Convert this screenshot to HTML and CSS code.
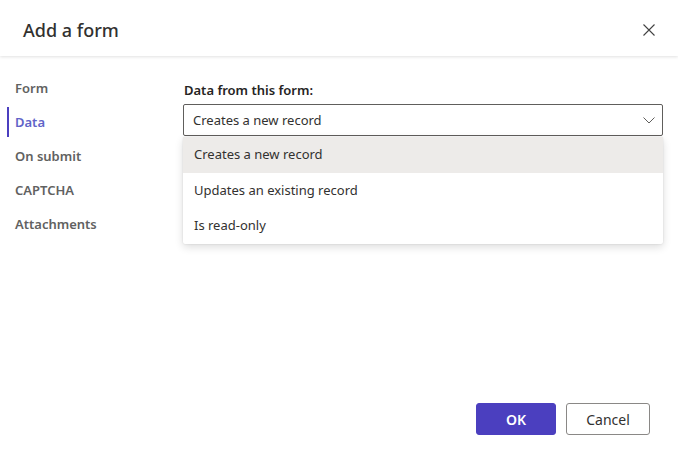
FILE: index.html
```html
<!DOCTYPE html>
<html lang="en">
<head>
  <meta charset="UTF-8">
  <meta name="viewport" content="width=device-width, initial-scale=1.0">
  <title>Add a form</title>
  <link rel="stylesheet" href="styles.css">
</head>
<body>
  <div class="dialog">
    <!-- Header -->
    <div class="dialog-header">
      <h1>Add a form</h1>
      <button class="close-btn" aria-label="Close">
        <svg width="12" height="12" viewBox="0 0 12 12">
          <path d="M0.5 0.5 L11.5 11.5 M11.5 0.5 L0.5 11.5" stroke="#424242" stroke-width="1.1" fill="none"/>
        </svg>
      </button>
    </div>

    <!-- Body -->
    <div class="dialog-body">
      <div class="side-nav">
        <div class="nav-item">Form</div>
        <div class="nav-item active">Data</div>
        <div class="nav-item">On submit</div>
        <div class="nav-item">CAPTCHA</div>
        <div class="nav-item">Attachments</div>
      </div>

      <div class="content">
        <label class="field-label">Data from this form:</label>
        <div class="dropdown">
          <div class="dropdown-box">
            <span>Creates a new record</span>
            <svg width="12" height="7" viewBox="0 0 12 7">
              <path d="M0.5 0.5 L6 6 L11.5 0.5" stroke="#605e5c" stroke-width="1" fill="none"/>
            </svg>
          </div>
          <div class="dropdown-menu">
            <div class="option selected">Creates a new record</div>
            <div class="option">Updates an existing record</div>
            <div class="option">Is read-only</div>
          </div>
        </div>
      </div>
    </div>

    <!-- Footer -->
    <div class="dialog-footer">
      <button class="btn primary">OK</button>
      <button class="btn">Cancel</button>
    </div>
  </div>
</body>
</html>
```

FILE: styles.css
```css
/* Reset and Base Styles */
* {
  margin: 0;
  padding: 0;
  box-sizing: border-box;
}

body {
  background: #ffffff;
  font-family: "Noto Sans", "Open Sans", sans-serif;
  color: #242424;
  width: 678px;
  height: 453px;
  overflow: hidden;
}

.dialog {
  display: flex;
  flex-direction: column;
  height: 100%;
}

/* Header */
.dialog-header {
  display: flex;
  justify-content: space-between;
  align-items: center;
  height: 56px;
  padding: 0 22px 0 23px;
  box-shadow: 0 1px 3px rgba(0, 0, 0, 0.12);
  position: relative;
  z-index: 1;
}

.dialog-header h1 {
  font-size: 18px;
  font-weight: 500;
  color: #323130;
  margin-top: 3px;
}

.close-btn {
  background: transparent;
  border: none;
  width: 14px;
  height: 14px;
  display: flex;
  align-items: center;
  justify-content: center;
  margin-top: 4px;
  cursor: pointer;
}

/* Body */
.dialog-body {
  flex: 1;
  display: flex;
}

.side-nav {
  width: 183px;
  padding: 17px 0 0 7px;
  display: flex;
  flex-direction: column;
  gap: 4px;
}

.nav-item {
  height: 30px;
  line-height: 30px;
  padding-left: 6px;
  font-size: 13px;
  font-weight: 600;
  color: #616161;
  border-left: 2px solid transparent;
}

.nav-item.active {
  color: #6163c8;
  border-left-color: #4b3fbf;
}

.content {
  flex: 1;
  padding: 24px 15px 0 0;
}

.field-label {
  display: block;
  font-size: 13px;
  font-weight: 600;
  line-height: 20px;
  color: #252423;
  margin-bottom: 4px;
  padding-left: 1px;
}

.dropdown {
  position: relative;
}

.dropdown-box {
  display: flex;
  justify-content: space-between;
  align-items: center;
  height: 32px;
  border: 1px solid #605e5c;
  border-radius: 2px;
  padding: 0 7px 0 9px;
  font-size: 13px;
  color: #323130;
}

.dropdown-menu {
  position: absolute;
  top: 33px;
  left: 0;
  right: 0;
  background: #ffffff;
  border-radius: 2px;
  box-shadow: 0 3px 8px rgba(0, 0, 0, 0.14), 0 0 2px rgba(0, 0, 0, 0.12);
}

.option {
  height: 35.5px;
  line-height: 35px;
  padding-left: 11px;
  font-size: 13px;
  color: #323130;
}

.option.selected {
  background: #edebe9;
}

/* Footer */
.dialog-footer {
  display: flex;
  justify-content: flex-end;
  gap: 10px;
  padding: 0 28px 18px 0;
}

.btn {
  height: 32px;
  min-width: 84px;
  padding: 0 16px;
  font-family: inherit;
  font-size: 14px;
  font-weight: 400;
  color: #323130;
  background: #ffffff;
  border: 1px solid #8a8886;
  border-radius: 3px;
  cursor: pointer;
}

.btn.primary {
  min-width: 80px;
  background: #4b3fbf;
  border-color: #4b3fbf;
  color: #ffffff;
  font-weight: 600;
}
```
